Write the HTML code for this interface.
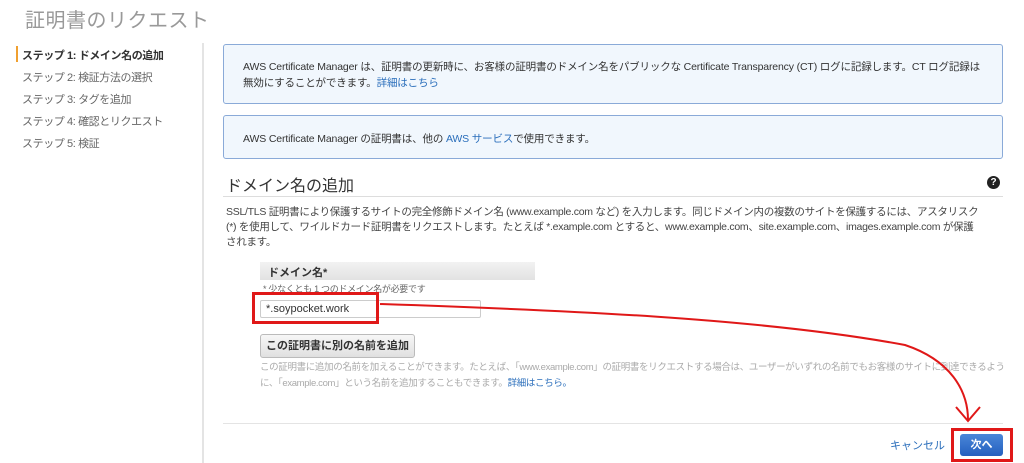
<!DOCTYPE html>
<html><head><meta charset="utf-8"><style>
*{margin:0;padding:0;box-sizing:border-box}
body{width:1024px;height:463px;background:#fff;position:relative;overflow:hidden;font-family:"Liberation Sans","Noto Sans CJK JP",sans-serif;color:#444}
.a{position:absolute;white-space:nowrap}
.title{left:25px;top:4px;font-size:20px;color:#999;letter-spacing:0.5px}
.side{left:22px;font-size:11px;color:#666;letter-spacing:-0.4px}
.box{position:absolute;left:223px;width:780px;background:#f1f7fd;border:1px solid #8aaad8;border-radius:3px;font-size:10.5px;color:#333;white-space:nowrap;letter-spacing:-0.15px}
a,.lk{color:#2a6ebb;text-decoration:none}
.p{font-size:10.5px;color:#444;line-height:15px;letter-spacing:-0.28px}
.note{font-size:9.5px;color:#aaa;line-height:16px;letter-spacing:-0.35px}
</style></head><body>
<div class="a title">証明書のリクエスト</div>
<div class="a" style="left:16px;top:46px;width:2px;height:16px;background:#f0a030"></div>
<div class="a side" style="top:47px;color:#333;font-weight:bold">ステップ 1: ドメイン名の追加</div>
<div class="a side" style="top:69px">ステップ 2: 検証方法の選択</div>
<div class="a side" style="top:91px">ステップ 3: タグを追加</div>
<div class="a side" style="top:113px">ステップ 4: 確認とリクエスト</div>
<div class="a side" style="top:135px">ステップ 5: 検証</div>
<div class="a" style="left:202px;top:43px;width:2px;height:420px;background:#e4e4e4"></div>

<div class="box" style="top:44px;height:60px;padding:14px 0 0 19px;line-height:16px">AWS Certificate Manager は、証明書の更新時に、お客様の証明書のドメイン名をパブリックな Certificate Transparency (CT) ログに記録します。CT ログ記録は<br>無効にすることができます。<span class="lk">詳細はこちら</span></div>
<div class="box" style="top:115px;height:44px;padding:15px 0 0 19px">AWS Certificate Manager の証明書は、他の <span class="lk">AWS サービス</span>で使用できます。</div>

<div class="a" style="left:226px;top:172px;font-size:16px;color:#333">ドメイン名の追加</div>
<div class="a" style="left:987px;top:176px;width:13px;height:13px;border-radius:50%;background:#222;color:#fff;font-size:10px;font-weight:bold;text-align:center;line-height:13px">?</div>
<div class="a" style="left:223px;top:196px;width:780px;height:1px;background:#ddd"></div>
<div class="a p" style="left:226px;top:205px">SSL/TLS 証明書により保護するサイトの完全修飾ドメイン名 (www.example.com など) を入力します。同じドメイン内の複数のサイトを保護するには、アスタリスク<br>(*) を使用して、ワイルドカード証明書をリクエストします。たとえば *.example.com とすると、www.example.com、site.example.com、images.example.com が保護<br>されます。</div>

<div class="a" style="left:260px;top:262px;width:275px;height:18px;background:linear-gradient(#f2f2f2,#e2e2e2);font-size:11px;font-weight:bold;color:#333;padding:2px 0 0 8px">ドメイン名*</div>
<div class="a" style="left:263px;top:282px;font-size:9px;color:#666;letter-spacing:-0.3px">* 少なくとも 1 つのドメイン名が必要です</div>
<div class="a" style="left:260px;top:300px;width:221px;height:18px;border:1px solid #ccc;border-radius:2px;font-size:11px;color:#333;padding:2px 0 0 5px">*.soypocket.work</div>
<div class="a" style="left:252px;top:292px;width:127px;height:32px;border:3px solid #e01818"></div>
<div class="a" style="left:260px;top:334px;width:155px;height:24px;border:1px solid #bbb;border-radius:3px;background:linear-gradient(#f7f7f7,#e0e0e0);font-size:11px;font-weight:bold;color:#333;text-align:center;line-height:22px">この証明書に別の名前を追加</div>
<div class="a note" style="left:260px;top:360px">この証明書に追加の名前を加えることができます。たとえば、「www.example.com」の証明書をリクエストする場合は、ユーザーがいずれの名前でもお客様のサイトに到達できるよう<br>に、「example.com」という名前を追加することもできます。<span class="lk">詳細はこちら。</span></div>

<div class="a" style="left:223px;top:423px;width:780px;height:1px;background:#e4e4e4"></div>
<div class="a" style="left:890px;top:437px;font-size:11px;color:#2a6ebb">キャンセル</div>
<div class="a" style="left:960px;top:434px;width:43px;height:22px;border-radius:3px;background:linear-gradient(#4a86d8,#2460bf);color:#fff;font-size:11px;font-weight:bold;text-align:center;line-height:22px">次へ</div>
<div class="a" style="left:951px;top:428px;width:62px;height:34px;border:3px solid #e01818"></div>

<svg class="a" style="left:0;top:0" width="1024" height="463">
<path d="M380 304 C 560 310, 760 318, 905 345 C 950 360, 968 390, 968 420" fill="none" stroke="#e01818" stroke-width="2"/>
<path d="M956 407 L968 421 L980 407" fill="none" stroke="#e01818" stroke-width="2"/>
</svg>
</body></html>
